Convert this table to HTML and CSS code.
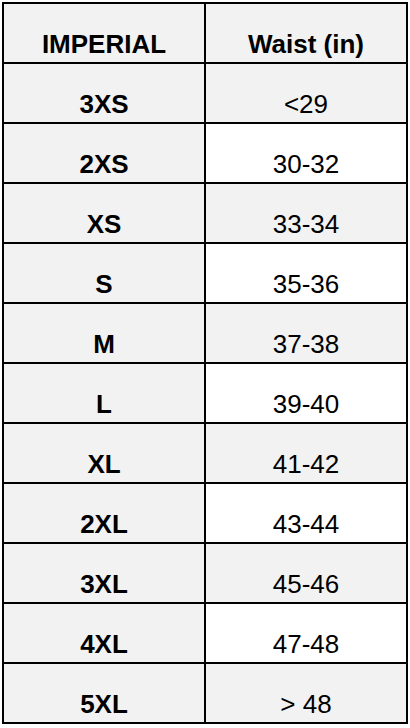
FILE: index.html
```html
<!DOCTYPE html>
<html>
<head>
<meta charset="utf-8">
<link rel="stylesheet" href="styles.css">
</head>
<body>
<div class="chart">
  <div class="cell head">IMPERIAL</div><div class="cell head">Waist (in)</div>
  <div class="cell size">3XS</div><div class="cell val shade">&lt;29</div>
  <div class="cell size">2XS</div><div class="cell val">30-32</div>
  <div class="cell size">XS</div><div class="cell val shade">33-34</div>
  <div class="cell size">S</div><div class="cell val">35-36</div>
  <div class="cell size">M</div><div class="cell val shade">37-38</div>
  <div class="cell size">L</div><div class="cell val">39-40</div>
  <div class="cell size">XL</div><div class="cell val shade">41-42</div>
  <div class="cell size">2XL</div><div class="cell val">43-44</div>
  <div class="cell size">3XL</div><div class="cell val shade">45-46</div>
  <div class="cell size">4XL</div><div class="cell val">47-48</div>
  <div class="cell size">5XL</div><div class="cell val shade">&gt; 48</div>
</div>
</body>
</html>
```

FILE: styles.css
```css
html, body {
  margin: 0;
  background: #fff;
}
body {
  padding: 2px;
  font-family: "Liberation Sans", Arial, sans-serif;
  color: #000;
}
.chart {
  display: grid;
  grid-template-columns: 200px 200px;
  grid-auto-rows: 58px;
  gap: 2px;
  padding: 2px;
  width: 402px;
  background: #000;
}
.cell {
  display: flex;
  align-items: flex-end;
  justify-content: center;
  padding-bottom: 5px;
  box-sizing: border-box;
  font-size: 26px;
  line-height: 26px;
  background: #fff;
}
.head, .size {
  font-weight: bold;
  background: #f2f2f2;
}
.shade {
  background: #f2f2f2;
}
```
